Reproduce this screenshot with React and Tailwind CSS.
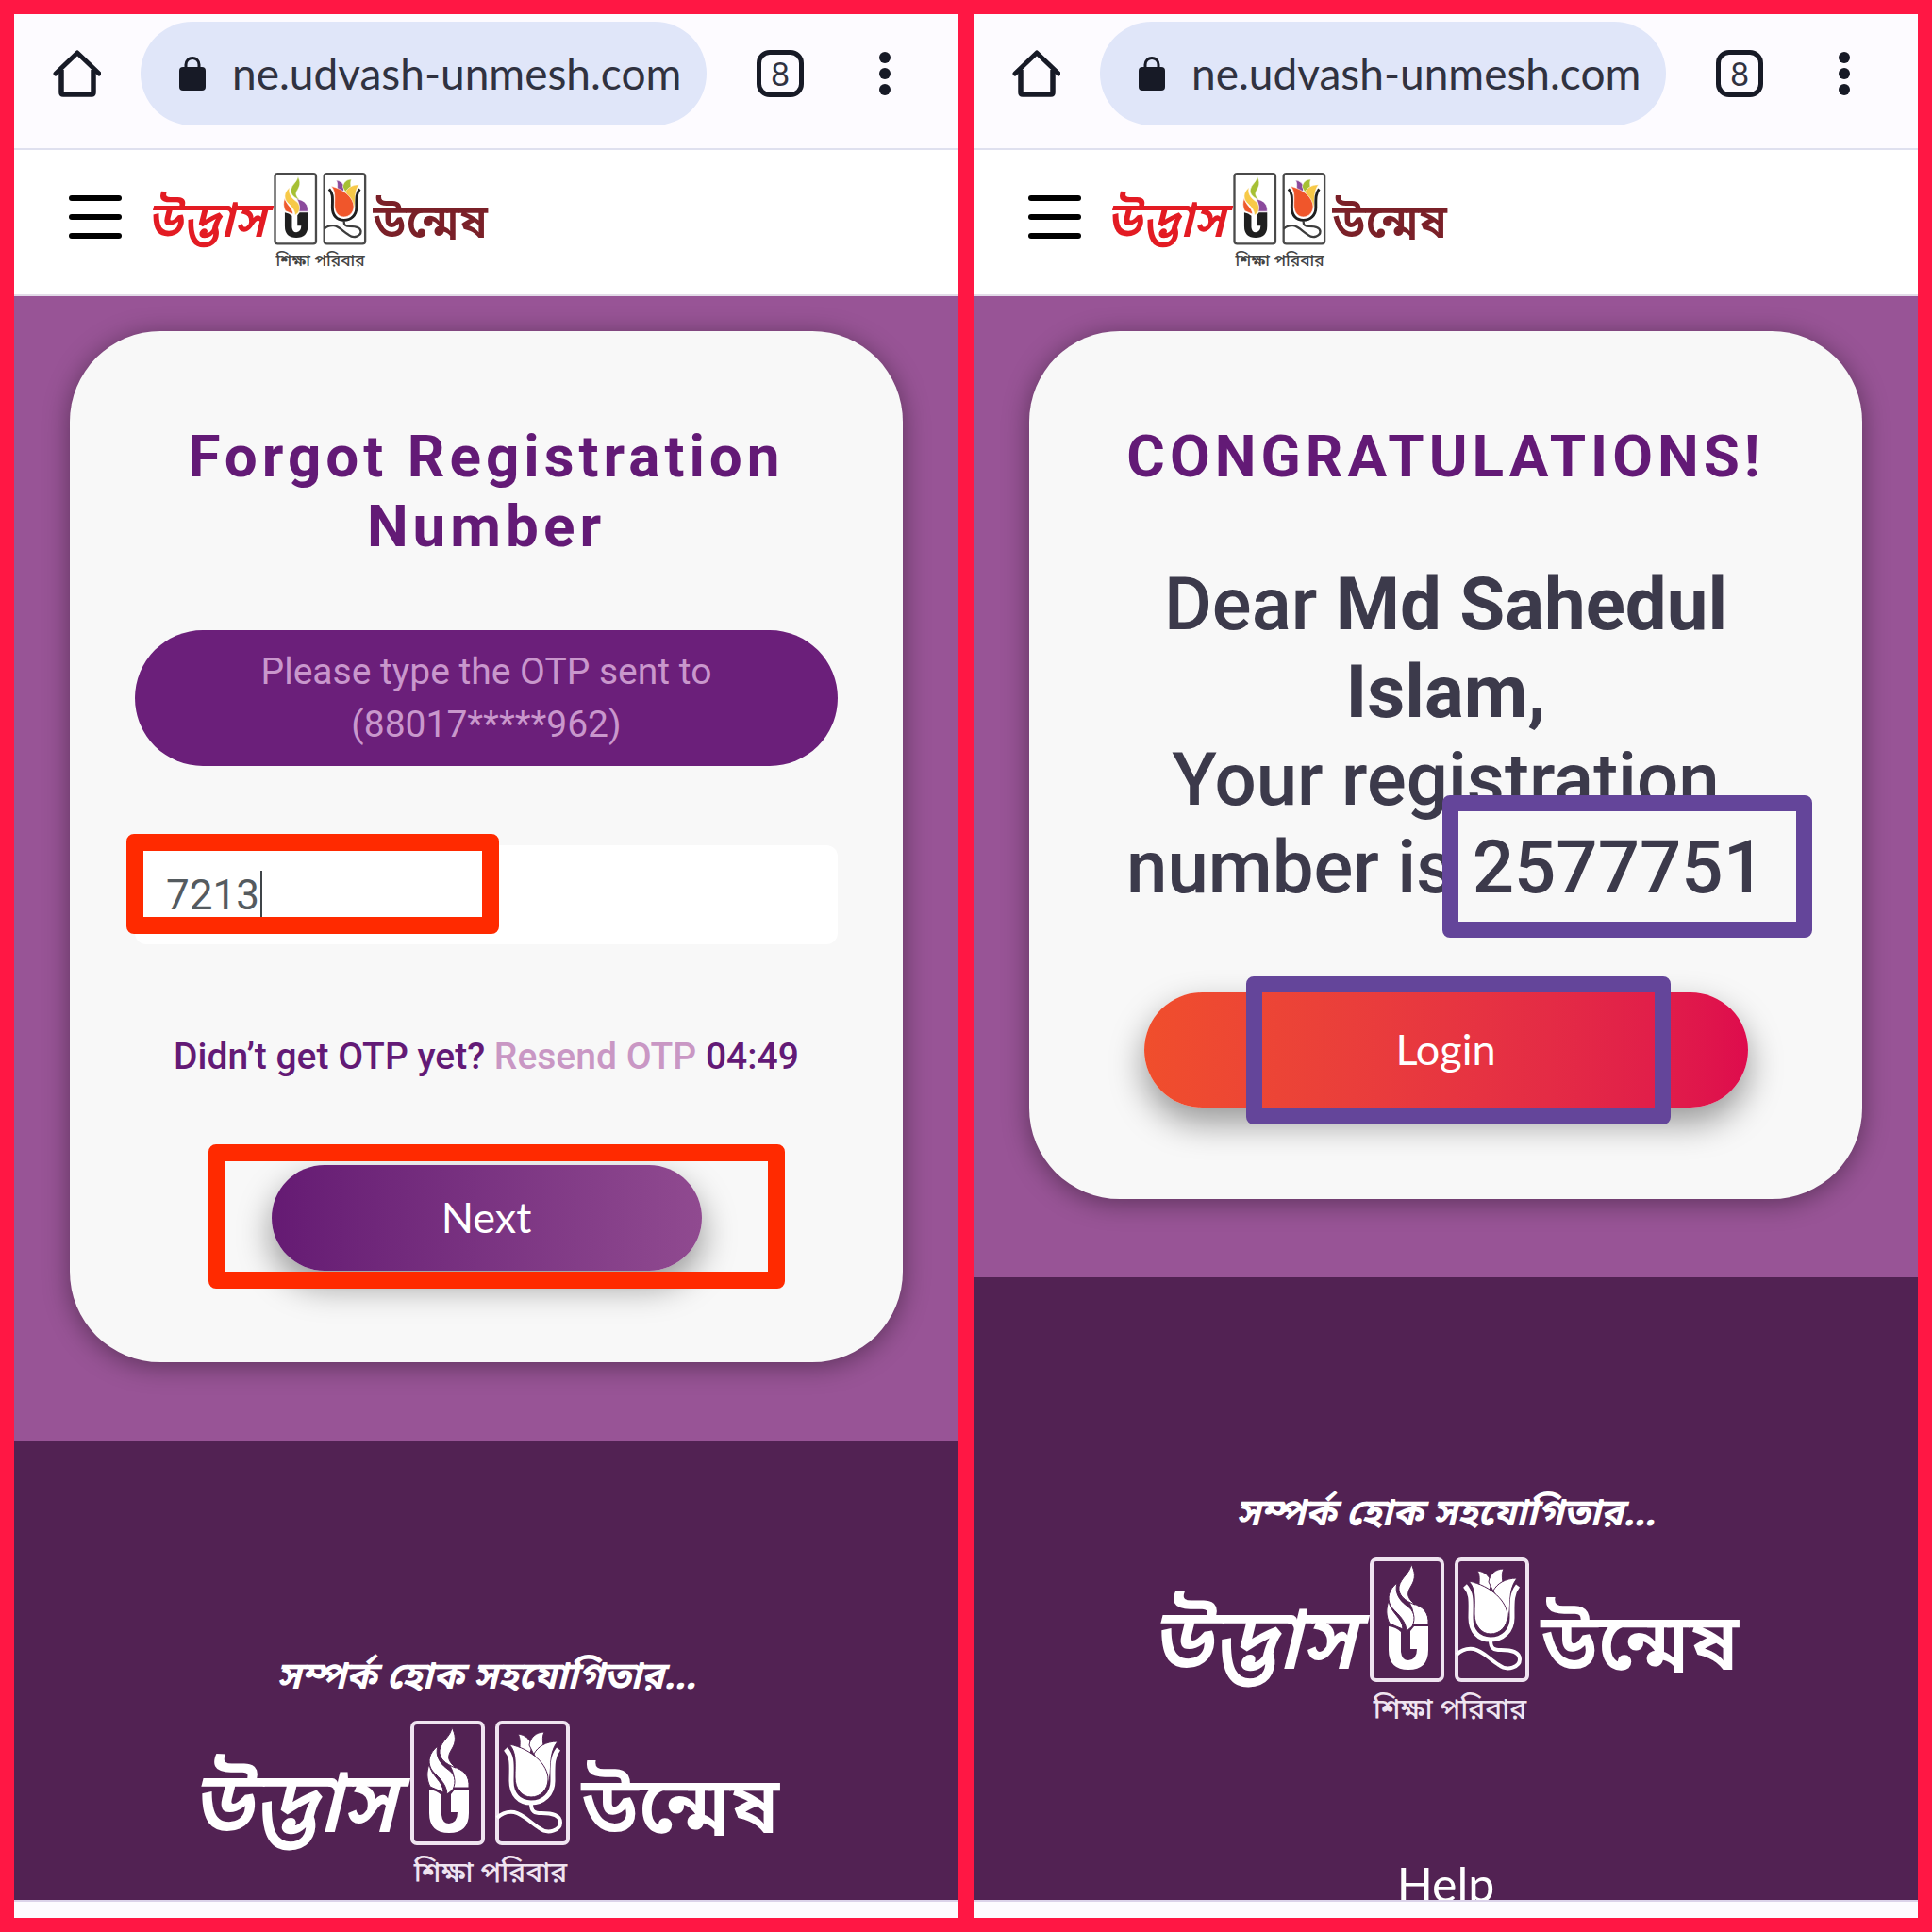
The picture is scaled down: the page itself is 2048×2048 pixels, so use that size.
import { useState } from "react";

function HomeIcon() {
  return (
    <svg viewBox="0 0 52 52" className="h-[52px] w-[52px]" fill="none" stroke="#171a26">
      <path d="M4 26 27 4l23 22" strokeWidth="5" strokeLinecap="round" strokeLinejoin="round" />
      <path d="M10 22v24q0 2 2 2h30q2 0 2-2V22" strokeWidth="5.500" />
    </svg>
  );
}

function LockIcon() {
  return (
    <svg viewBox="0 0 28 36" className="h-9 w-7 shrink-0">
      <path d="M7 14V8.500a7 7 0 0 1 14 0V14" fill="none" stroke="#171a26" strokeWidth="3" />
      <rect x="0" y="11" width="28" height="25" rx="4" fill="#171a26" />
    </svg>
  );
}

function BrowserBar() {
  return (
    <div className="flex h-36 shrink-0 items-start border-b-2 border-[#dfe0ef] bg-[#fdfbff] pt-2 pr-[72px] pl-10">
      <div className="flex h-[110px] w-full items-center">
        <button type="button" aria-label="Home" className="shrink-0">
          <HomeIcon />
        </button>
        <div className="ml-[42px] flex h-[110px] min-w-0 flex-1 items-center rounded-full bg-[#e0e6f9] pl-[41px]">
          <LockIcon />
          <span className="ml-7 font-[Lato,sans-serif] text-[46px] leading-none whitespace-nowrap text-[#303240]">
            ne.udvash-unmesh.com
          </span>
        </div>
        <button
          type="button"
          aria-label="Tabs"
          className="ml-[53px] flex h-[50px] w-[50px] shrink-0 items-center justify-center rounded-[14px] border-[5px] border-[#171a26] font-[Lato,sans-serif] text-[34px] leading-none text-[#303240]"
        >
          8
        </button>
        <button type="button" aria-label="Menu" className="ml-20 flex shrink-0 flex-col gap-[5px]">
          <span className="h-3 w-3 rounded-full bg-[#171a26]" />
          <span className="h-3 w-3 rounded-full bg-[#171a26]" />
          <span className="h-3 w-3 rounded-full bg-[#171a26]" />
        </button>
      </div>
    </div>
  );
}

const COLORS = {
  color: {
    left: "#e31b23",
    right: "#7a2028",
    frame: "#4a4a4a",
    caption: "#444444",
    tip: "#a6c034",
    mid: "#f7c948",
    low: "#ee5a2d",
    side: "#8b4a9c",
    cup: "#1f1f1f",
    tulip: "#f0562b",
    line: "#ffffff",
    stem: "#3d3d3d",
  },
  white: {
    left: "#ffffff",
    right: "#ffffff",
    frame: "#efe4f0",
    caption: "#efe4f0",
    tip: "#ffffff",
    mid: "#ffffff",
    low: "#ffffff",
    side: "#ffffff",
    cup: "#ffffff",
    tulip: "#ffffff",
    line: "#522253",
    stem: "#ffffff",
  },
};

function Logo({ variant, className }) {
  const c = COLORS[variant];

  return (
    <svg viewBox="0 0 621 176" className={className} role="img" aria-label="উদ্ভাস উন্মেষ">
      <text x="215" y="118" fontSize="91" fontWeight="600" textAnchor="end" fontStyle="italic" fill={c.left} fontFamily="'Noto Sans Bengali','Noto Sans',sans-serif">
        উদ্ভাস
      </text>
      <text x="621" y="119" fontSize="84" fontWeight="600" textAnchor="end" fill={c.right} fontFamily="'Noto Sans Bengali','Noto Sans',sans-serif">
        উন্মেষ
      </text>

      <g fill="none" stroke={c.frame} strokeWidth="4">
        <rect x="232" y="2" width="75" height="128" rx="5" />
        <rect x="322" y="2" width="75" height="128" rx="5" />
      </g>

      {/* flame */}
      <g stroke={c.line} strokeWidth="1">
        <path d="M266 40c9 10 12 18 9 31h17c1-13-6-19-16-22z" fill={c.side} />
        <path d="M250 46c-3 8-3 16 1 24l14 6c0-12-13-17-15-30z" fill={c.low} />
        <path d="M259 27c-9 7-11 16-7 24 5 8 16 13 17 27l6-5c4-9 2-17-6-22-8-6-13-14-10-24z" fill={c.mid} />
        <path d="M274 7c-1 10-11 14-13 24-1 9 6 15 17 19-9-8-9-12-4-20s4-15 0-23z" fill={c.tip} />
      </g>
      <path
        d="M250 73q8 1 13 6v21q1 9 8 9 9-1 9-12h-7V78l4-5h15v25q0 21-21 21t-21-21z"
        fill={c.cup}
      />

      {/* tulip */}
      <g stroke={c.line} strokeWidth="1">
        <path d="M344 14c8 1 12 5 15 12l-3 14-10-10c0-7 1-11-2-16z" fill={c.side} />
        <path d="M372 12c-9 0-15 6-16 14l6 12 9-12c-1-6-1-10 1-14z" fill={c.tip} />
        <path d="M386 22c-13 0-21 6-25 13 4 10 10 22 15 32 5-14-1-31 10-45z" fill={c.mid} />
        <path d="M335 25c8 9 6 21 6 35 0 12 7 21 17 21s18-8 18-19c0-15-17-32-41-37z" fill={c.tulip} />
      </g>
      <path
        d="M331 30c8 9 6 18 6 34 0 14 8 23 21 23s23-9 23-23c0-16-1-25 6-34"
        fill="none"
        stroke={c.cup}
        strokeWidth="5"
      />
      <path
        d="M358 88c0 9 4 10 11 10 12 0 20 2 20 10s-13 13-22 6c-10-6-17-15-27-17-8-1-14 2-18 6"
        fill="none"
        stroke={c.stem}
        strokeWidth="4"
      />

      <text x="315" y="171" fontSize="30" fontWeight="500" textAnchor="middle" fill={c.caption} fontFamily="'Noto Sans Bengali','Noto Sans',sans-serif">
        শিক্ষা পরিবার
      </text>
    </svg>
  );
}

function SiteHeader() {
  return (
    <header className="flex h-[155px] shrink-0 items-start border-b-2 border-[#e3dbe8] bg-white pt-6 pl-[58px]">
      <button type="button" aria-label="Open menu" className="mt-6 flex w-14 flex-col gap-[14px]">
        <span className="h-[6px] rounded-sm bg-black" />
        <span className="h-[6px] rounded-sm bg-black" />
        <span className="h-[6px] rounded-sm bg-black" />
      </button>
      <a href="#home" className="ml-7">
        <Logo variant="color" className="h-[102px] w-[360px] overflow-visible" />
      </a>
    </header>
  );
}

function SiteFooter() {
  return (
    <footer className="flex min-h-0 flex-1 flex-col items-center overflow-hidden bg-[#522253] pt-[223px] text-white">
      <p className="shrink-0 font-['Noto_Sans_Bengali','Noto_Sans',sans-serif] text-[40px] leading-[60px] font-bold whitespace-nowrap italic">
        সম্পর্ক হোক সহযোগিতার...
      </p>
      <Logo variant="white" className="mt-[14px] h-[176px] w-[621px] shrink-0 overflow-visible" />
      <a href="#help" className="mt-[140px] shrink-0 font-[Lato,sans-serif] text-[50px] leading-[60px]">
        Help
      </a>
    </footer>
  );
}

function Phone({ children }) {
  return (
    <div className="flex min-w-0 flex-1 flex-col bg-[#fdfbff]">
      <BrowserBar />
      <SiteHeader />
      <main className="shrink-0 bg-[#985496] px-[59px] pt-[37px] pb-[83px]">
        <section className="rounded-[96px] bg-[#f8f8f8] px-[69px] pt-24 pb-[97px] text-center font-[Roboto,sans-serif] shadow-[0_4px_28px_rgba(0,0,0,0.4)]">
          {children}
        </section>
      </main>
      <SiteFooter />
      <div className="h-[19px] shrink-0 border-t-2 border-[#dcd3ea]" />
    </div>
  );
}

function Title({ children }) {
  return (
    <h1 className="text-[62px] leading-[74px] font-bold tracking-[5px] text-[#631a76]">
      {children}
    </h1>
  );
}

function OtpForm() {
  const [otp, setOtp] = useState("7213");

  return (
    <form onSubmit={(e) => e.preventDefault()}>
      <Title>Forgot Registration Number</Title>

      <label
        htmlFor="otp"
        className="mt-[73px] block rounded-full bg-[#6b1f7a] px-24 py-4 text-[39px] leading-14 text-[#c997cc]"
      >
        Please type the OTP sent to (88017*****962)
      </label>

      <div className="relative mt-[84px]">
        <input
          id="otp"
          value={otp}
          onChange={(e) => setOtp(e.target.value)}
          className="block h-[105px] w-full rounded-xl bg-white px-[33px] text-[44px] text-[#555b5f] outline-none"
        />
        <span className="absolute top-[27px] left-[133px] h-[49px] w-[2px] bg-[#3f4448]" />
        <span className="pointer-events-none absolute -top-3 -left-[9px] h-[106px] w-[395px] rounded-lg border-[18px] border-[#ff2a00]" />
      </div>

      <p className="mt-[91px] text-[39px] leading-14 font-medium whitespace-nowrap text-[#631a76]">
        Didn’t get OTP yet? <a href="#resend" className="text-[#c997c4]">Resend OTP</a> 04:49
      </p>

      <div className="relative mx-auto mt-[87px] w-[456px]">
        <button
          type="submit"
          className="block h-28 w-full rounded-full bg-linear-to-r from-[#651a73] to-[#904a90] font-[Lato,sans-serif] text-[45px] text-white shadow-[0_16px_36px_rgba(0,0,0,0.4)]"
        >
          Next
        </button>
        <span className="pointer-events-none absolute -top-[22px] -left-[67px] h-[153px] w-[611px] rounded-lg border-[18px] border-[#ff2a00]" />
      </div>
    </form>
  );
}

function Congratulations() {
  return (
    <>
      <Title>CONGRATULATIONS!</Title>

      <div className="relative mt-[73px]">
        <p className="text-[78px] leading-[93px] font-medium text-[#3c3a4b]">
          Dear <b className="font-bold">Md Sahedul Islam,</b>
          <br />
          Your registration number is 2577751
        </p>
        <span className="pointer-events-none absolute top-[249px] -right-4 h-[151px] w-[392px] rounded-lg border-[17px] border-[#64459a]" />
      </div>

      <div className="relative mx-auto mt-[86px] w-[640px]">
        <button
          type="button"
          className="block h-[122px] w-full rounded-full bg-linear-to-r from-[#f04e2c] to-[#de0b4d] font-[Lato,sans-serif] text-[45px] text-white shadow-[0_16px_36px_rgba(0,0,0,0.4)]"
        >
          Login
        </button>
        <span className="pointer-events-none absolute -top-[17px] left-[108px] h-[157px] w-[450px] rounded-lg border-[17px] border-[#64459a]" />
      </div>
    </>
  );
}

export default function App() {
  return (
    <div className="flex h-screen gap-4 bg-[#ff1744] p-[15px]">
      <Phone>
        <OtpForm />
      </Phone>
      <Phone>
        <Congratulations />
      </Phone>
    </div>
  );
}
